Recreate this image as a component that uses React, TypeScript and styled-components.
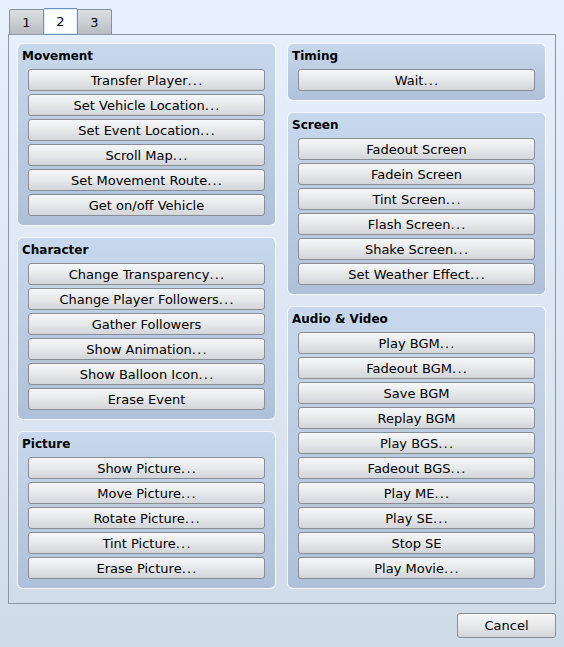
import React, { useState } from 'react';
import styled, { createGlobalStyle } from 'styled-components';

const GlobalStyle = createGlobalStyle`
	html, body {
		margin: 0;
		padding: 0;
	}
	body {
		font-family: "DejaVu Sans", "Liberation Sans", sans-serif;
		font-size: 13px;
		color: #000;
	}
`;

const Window = styled('div')`
	box-sizing: border-box;
	width: 564px;
	height: 647px;
	padding: 8px 8px 0 8px;
	background: linear-gradient(to bottom, #e7f1fd 0%, #dbe6f2 60%, #cfdbe7 100%);
`;

const TabBar = styled('div')`
	display: flex;
	height: 26px;
	padding-left: 1px;
	align-items: flex-end;
`;

const Tab = styled('div')<{ active?: boolean }>`
	box-sizing: border-box;
	width: 35px;
	height: ${(p) => (p.active ? '27px' : '25px')};
	margin-bottom: ${(p) => (p.active ? '-1px' : '0')};
	display: flex;
	align-items: center;
	justify-content: center;
	font-size: 13px;
	border: 1px solid ${(p) => (p.active ? '#6f93b8' : '#8b9097')};
	border-bottom: ${(p) => (p.active ? '1px solid #6f93b8' : 'none')};
	border-radius: 2px 2px 0 0;
	background: ${(p) =>
		p.active
			? '#ffffff'
			: 'linear-gradient(to bottom, #dcdfe2 0%, #c9cdd1 55%, #b7bcc2 100%)'};
	box-shadow: ${(p) => (p.active ? 'inset 0 0 0 1px #dce8f4' : 'none')};
	position: relative;
	z-index: ${(p) => (p.active ? 1 : 0)};
	cursor: default;
	& + & {
		margin-left: -1px;
	}
`;

const Panel = styled('div')`
	box-sizing: border-box;
	height: 570px;
	border: 1px solid #8c98a5;
	padding: 8px 9px 8px 8px;
	display: grid;
	grid-template-columns: 259px 259px;
	column-gap: 11px;
	align-items: start;
`;

const Column = styled('div')`
	display: flex;
	flex-direction: column;
	gap: 11px;
`;

const Group = styled('div')`
	box-sizing: border-box;
	border: 1px solid rgba(255, 255, 255, 0.85);
	border-radius: 6px;
	padding: 4px 10px 9px 10px;
	background: linear-gradient(to bottom, #c8d8ec 0%, #b9cae0 60%, #afc1d8 100%);
`;

const GroupTitle = styled('div')`
	font-weight: bold;
	font-size: 12px;
	line-height: 16px;
	height: 16px;
	margin: 0 0 5px -6px;
	color: #000;
`;

const ButtonList = styled('div')`
	display: flex;
	flex-direction: column;
	gap: 3px;
`;

const Button = styled('button')<{ wide?: boolean }>`
	box-sizing: border-box;
	width: ${(p) => (p.wide ? '237px' : '99px')};
	height: 22px;
	margin: 0;
	padding: 0;
	font-family: "DejaVu Sans", "Liberation Sans", sans-serif;
	font-size: 13px;
	color: #000;
	border: 1px solid #8a8e93;
	border-radius: 3px;
	background: linear-gradient(to bottom, #f6f7f8 0%, #e6e8ea 50%, #d2d5d9 100%);
	cursor: default;
	white-space: nowrap;
	&:active {
		background: linear-gradient(to bottom, #d8dde2 0%, #e8ebee 100%);
	}
`;

const Dots = styled('span')`
	letter-spacing: 1.2px;
	margin-right: -1.2px;
`;

const Footer = styled('div')`
	display: flex;
	justify-content: flex-end;
	padding-top: 9px;
`;

const CancelButton = styled(Button)`
	height: 25px;
`;

interface GroupData {
	title: string;
	items: string[];
}

const leftGroups: GroupData[] = [
	{
		title: 'Movement',
		items: [
			'Transfer Player...',
			'Set Vehicle Location...',
			'Set Event Location...',
			'Scroll Map...',
			'Set Movement Route...',
			'Get on/off Vehicle',
		],
	},
	{
		title: 'Character',
		items: [
			'Change Transparency...',
			'Change Player Followers...',
			'Gather Followers',
			'Show Animation...',
			'Show Balloon Icon...',
			'Erase Event',
		],
	},
	{
		title: 'Picture',
		items: ['Show Picture...', 'Move Picture...', 'Rotate Picture...', 'Tint Picture...', 'Erase Picture...'],
	},
];

const rightGroups: GroupData[] = [
	{ title: 'Timing', items: ['Wait...'] },
	{
		title: 'Screen',
		items: [
			'Fadeout Screen',
			'Fadein Screen',
			'Tint Screen...',
			'Flash Screen...',
			'Shake Screen...',
			'Set Weather Effect...',
		],
	},
	{
		title: 'Audio & Video',
		items: [
			'Play BGM...',
			'Fadeout BGM...',
			'Save BGM',
			'Replay BGM',
			'Play BGS...',
			'Fadeout BGS...',
			'Play ME...',
			'Play SE...',
			'Stop SE',
			'Play Movie...',
		],
	},
];

// commands that open a dialog end in "..."; the dots sit a little wider than the font's own
const Label = ({ text }: { text: string }) =>
	text.endsWith('...') ? (
		<>
			{text.slice(0, -3)}
			<Dots>...</Dots>
		</>
	) : (
		<>{text}</>
	);

const CommandGroup = ({ title, items }: GroupData) => (
	<Group>
		<GroupTitle>{title}</GroupTitle>
		<ButtonList>
			{items.map((item) => (
				<Button wide key={item}>
					<Label text={item} />
				</Button>
			))}
		</ButtonList>
	</Group>
);

export const App = (): JSX.Element => {
	const [tab, setTab] = useState(2);

	return (
		<Window>
			<GlobalStyle />
			<TabBar>
				{[1, 2, 3].map((n) => (
					<Tab key={n} active={tab === n} onClick={() => setTab(n)}>
						{n}
					</Tab>
				))}
			</TabBar>
			<Panel>
				<Column>
					{leftGroups.map((g) => (
						<CommandGroup key={g.title} {...g} />
					))}
				</Column>
				<Column>
					{rightGroups.map((g) => (
						<CommandGroup key={g.title} {...g} />
					))}
				</Column>
			</Panel>
			<Footer>
				<CancelButton>Cancel</CancelButton>
			</Footer>
		</Window>
	);
};

export default App;
